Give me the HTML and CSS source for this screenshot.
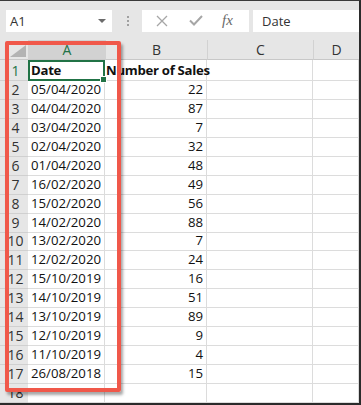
FILE: index.html
```html
<!DOCTYPE html>
<html lang="en">
<head>
  <meta charset="UTF-8">
  <meta name="viewport" content="width=device-width, initial-scale=1.0">
  <title>Sales sheet</title>
  <link rel="stylesheet" href="styles.css">
</head>
<body>

<div class="window">
  <div class="toolbar">
    <div class="namebox">
      <span>A1</span>
      <svg class="caret" width="8" height="4" viewBox="0 0 8 4"><path d="M0 0h8L4 4z" fill="#6b6b6b"/></svg>
    </div>
    <div class="grip"><i></i><i></i><i></i></div>
    <div class="fxbox">
      <svg width="12" height="12" viewBox="0 0 12 12"><path d="M1 1l10 10M11 1L1 11" stroke="#a6a6a6" stroke-width="1.3" fill="none"/></svg>
      <svg width="14" height="11" viewBox="0 0 14 11"><path d="M1 5.5l4 4L13 1" stroke="#a6a6a6" stroke-width="2" fill="none"/></svg>
      <span class="fx">fx</span>
    </div>
    <div class="formula">Date</div>
  </div>

  <div class="sheet">
    <div class="corner"><svg width="16" height="12" viewBox="0 0 16 12"><path d="M16 0v12H0z" fill="#b3b3b3"/></svg></div>
    <div class="colhead active">A</div>
    <div class="colhead">B</div>
    <div class="colhead">C</div>
    <div class="colhead">D</div>

    <div class="rowhead active">1</div>
    <div class="cell bold selected">Date</div>
    <div class="cell bold over">Number of Sales</div>
    <div class="cell"></div>
    <div class="cell"></div>

    <div class="rowhead">2</div><div class="cell">05/04/2020</div><div class="cell num">22</div><div class="cell"></div><div class="cell"></div>
    <div class="rowhead">3</div><div class="cell">04/04/2020</div><div class="cell num">87</div><div class="cell"></div><div class="cell"></div>
    <div class="rowhead">4</div><div class="cell">03/04/2020</div><div class="cell num">7</div><div class="cell"></div><div class="cell"></div>
    <div class="rowhead">5</div><div class="cell">02/04/2020</div><div class="cell num">32</div><div class="cell"></div><div class="cell"></div>
    <div class="rowhead">6</div><div class="cell">01/04/2020</div><div class="cell num">48</div><div class="cell"></div><div class="cell"></div>
    <div class="rowhead">7</div><div class="cell">16/02/2020</div><div class="cell num">49</div><div class="cell"></div><div class="cell"></div>
    <div class="rowhead">8</div><div class="cell">15/02/2020</div><div class="cell num">56</div><div class="cell"></div><div class="cell"></div>
    <div class="rowhead">9</div><div class="cell">14/02/2020</div><div class="cell num">88</div><div class="cell"></div><div class="cell"></div>
    <div class="rowhead">10</div><div class="cell">13/02/2020</div><div class="cell num">7</div><div class="cell"></div><div class="cell"></div>
    <div class="rowhead">11</div><div class="cell">12/02/2020</div><div class="cell num">24</div><div class="cell"></div><div class="cell"></div>
    <div class="rowhead">12</div><div class="cell">15/10/2019</div><div class="cell num">16</div><div class="cell"></div><div class="cell"></div>
    <div class="rowhead">13</div><div class="cell">14/10/2019</div><div class="cell num">51</div><div class="cell"></div><div class="cell"></div>
    <div class="rowhead">14</div><div class="cell">13/10/2019</div><div class="cell num">89</div><div class="cell"></div><div class="cell"></div>
    <div class="rowhead">15</div><div class="cell">12/10/2019</div><div class="cell num">9</div><div class="cell"></div><div class="cell"></div>
    <div class="rowhead">16</div><div class="cell">11/10/2019</div><div class="cell num">4</div><div class="cell"></div><div class="cell"></div>
    <div class="rowhead">17</div><div class="cell">26/08/2018</div><div class="cell num">15</div><div class="cell"></div><div class="cell"></div>
    <div class="rowhead">18</div><div class="cell"></div><div class="cell"></div><div class="cell"></div><div class="cell"></div>
  </div>

  <div class="callout"></div>
</div>

</body>
</html>
```

FILE: styles.css
```css
body {
  margin: 0;
  font-family: 'Open Sans', 'Liberation Sans', sans-serif;
  color: #111;
}
.window {
  position: relative;
  width: 359px;
  height: 402px;
  border-top: 1px solid #3a3a3a;
  border-right: 2px solid #2b2b2b;
  border-bottom: 2px solid #2b2b2b;
  overflow: hidden;
  background: #fff;
}
.toolbar {
  display: flex;
  align-items: center;
  height: 39px;
  padding-left: 6px;
  background: #e6e6e6;
}
.namebox {
  display: flex;
  align-items: center;
  justify-content: space-between;
  width: 96px;
  height: 22px;
  padding: 0 6px 0 4px;
  background: #fff;
  font-size: 13px;
  color: #333;
}
.grip {
  display: flex;
  flex-direction: column;
  gap: 2px;
  margin: 0 13px 0 15px;
}
.grip i {
  width: 2px;
  height: 2px;
  background: #a0a0a0;
}
.fxbox {
  display: flex;
  align-items: center;
  width: 107px;
  height: 22px;
  padding-left: 14px;
  gap: 21px;
  box-sizing: border-box;
  background: #fff;
}
.fx {
  font-family: 'Liberation Serif', serif;
  font-style: italic;
  font-size: 15px;
  color: #6a6a6a;
  margin-left: -2px;
}
.formula {
  flex: 1;
  height: 22px;
  margin-left: 4px;
  padding-left: 9px;
  line-height: 22px;
  background: #fff;
  font-size: 13px;
  color: #333;
}
.sheet {
  display: grid;
  grid-template-columns: 28px 77px 102px 106px 1fr;
  grid-template-rows: 20px 21px repeat(17, 18.95px);
  font-size: 13.2px;
}
.corner {
  display: flex;
  align-items: flex-end;
  justify-content: flex-end;
  padding: 0 2px 2px 0;
  background: #e6e6e6;
  border-bottom: 1px solid #c8c8c8;
}
.colhead {
  display: flex;
  align-items: center;
  justify-content: center;
  background: #e6e6e6;
  border-bottom: 1px solid #c8c8c8;
  border-left: 1px solid #d2d2d2;
  font-size: 14px;
  color: #333;
}
.colhead.active {
  background: #d2d2d2;
  color: #217346;
}
.rowhead {
  display: flex;
  align-items: flex-end;
  justify-content: center;
  padding-left: 3px;
  background: #e6e6e6;
  border-bottom: 1px solid #d0d0d0;
  font-size: 14px;
  color: #333;
}
.rowhead.active {
  color: #217346;
}
.cell {
  display: flex;
  align-items: flex-end;
  padding: 0 3px 1px 3px;
  border-right: 1px solid #dcdcdc;
  border-bottom: 1px solid #dcdcdc;
  white-space: nowrap;
}
.cell.bold {
  font-weight: bold;
  letter-spacing: -0.3px;
}
.cell.num {
  justify-content: flex-end;
}
.cell.over {
  overflow: visible;
  padding-left: 1px;
}
.cell.selected {
  position: relative;
  border: 2px solid #217346;
  padding: 0 2px 0 1px;
}
.cell.selected::after {
  content: "";
  position: absolute;
  right: -4px;
  bottom: -4px;
  width: 5px;
  height: 5px;
  background: #217346;
  border: 1px solid #fff;
}
.callout {
  position: absolute;
  left: 5px;
  top: 40px;
  width: 108px;
  height: 343px;
  border: 4px solid #f0584a;
  border-radius: 2px;
  box-shadow: 2px 3px 3px rgba(0, 0, 0, 0.35);
}
```
